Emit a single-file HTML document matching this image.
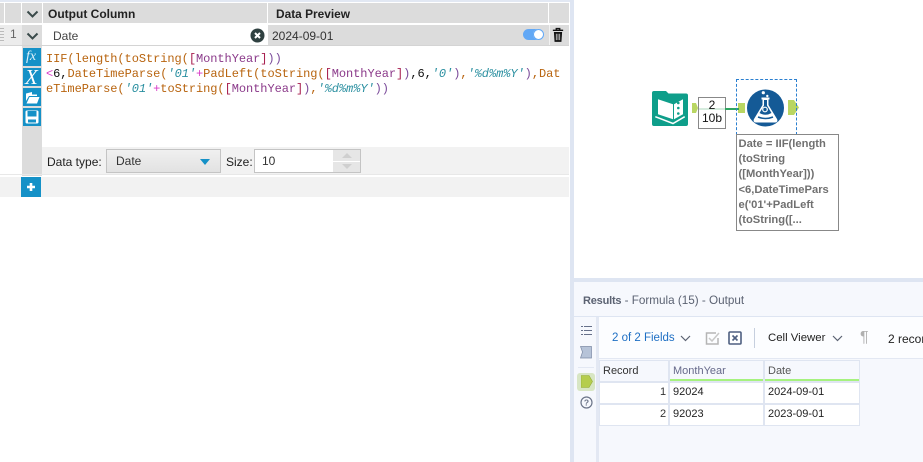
<!DOCTYPE html>
<html><head><meta charset="utf-8">
<style>
html,body{margin:0;padding:0;width:923px;height:462px;overflow:hidden;background:#fff}
body{position:relative;font-family:"Liberation Sans",sans-serif;font-size:12px;color:#222}
.a{position:absolute;white-space:nowrap}
.code{font-family:"Liberation Mono",monospace;font-size:12px;letter-spacing:-.06px;line-height:15px;left:46px;color:#b8640f}
.p{color:#8b3a8a}.r{color:#a82050}.b{color:#111}.s{color:#2a8fa0;font-style:italic}.m{color:#d83ac8}
.c{color:#7a4a9a}
.ib{position:absolute;left:23px;width:18px;height:18px;background:#1591c7}
.t{font-size:11px}
</style></head><body>

<!-- top strip and left pane -->
<div class="a" style="left:0;top:0;width:570px;height:2px;background:#e2e8f3"></div>
<div class="a" style="left:5px;top:3px;width:16px;height:20px;background:#dcdcdc"></div>
<div class="a" style="left:0;top:3px;width:4px;height:20px;background:#dcdcdc"></div>
<div class="a" style="left:22px;top:3px;width:20px;height:20px;background:#dcdcdc"></div>
<div class="a" style="left:43px;top:3px;width:224px;height:20px;background:#dcdcdc"></div>
<div class="a" style="left:268px;top:3px;width:280px;height:20px;background:#dcdcdc"></div>
<div class="a" style="left:549px;top:3px;width:20px;height:20px;background:#dcdcdc"></div>
<svg class="a" style="left:26px;top:10px" width="14" height="9"><path d="M1.500 1.500L6.500 6.500L11.500 1.500" fill="none" stroke="#3a4a4a" stroke-width="2"/></svg>
<div class="a" style="left:48px;top:7px;font-weight:bold;font-size:12px;color:#222">Output Column</div>
<div class="a" style="left:276px;top:7px;font-weight:bold;font-size:11.900px;color:#222">Data Preview</div>

<div class="a" style="left:0;top:25px;width:22px;height:20px;background:#ececec"></div>
<div class="a" style="left:0;top:28px;width:4px;height:14px;background:repeating-linear-gradient(#bbb 0 1px,#eee 1px 3px)"></div>
<div class="a" style="left:10px;top:27px;color:#666">1</div>
<div class="a" style="left:22px;top:25px;width:20px;height:20px;background:#dcdcdc"></div>
<svg class="a" style="left:26px;top:32px" width="14" height="9"><path d="M1.500 1.500L6.500 6.500L11.500 1.500" fill="none" stroke="#3a4a4a" stroke-width="2"/></svg>
<div class="a" style="left:43px;top:26px;width:224px;height:18px;background:#fff"></div>
<div class="a" style="left:53px;top:29px;color:#444">Date</div>
<svg class="a" style="left:250px;top:28px" width="15" height="15"><circle cx="7.500" cy="7.500" r="7" fill="#2f4040"/><path d="M5 5L10 10M10 5L5 10" stroke="#fff" stroke-width="2"/></svg>
<div class="a" style="left:268px;top:25px;width:301px;height:20px;background:#dcdcdc"></div>
<div class="a" style="left:549px;top:25px;width:1px;height:20px;background:#f2f2f2"></div>
<div class="a" style="left:272px;top:29px;color:#333">2024-09-01</div>
<div class="a" style="left:523px;top:29px;width:21px;height:11px;border-radius:6px;background:#62a8f5"></div>
<div class="a" style="left:533px;top:29px;width:11px;height:11px;border-radius:6px;background:#fff;box-shadow:inset 0 0 0 1px #62a8f5"></div>
<svg class="a" style="left:552px;top:27px" width="12" height="16" viewBox="0 0 14 18"><path d="M1 3.500H13M5 3V1.500H9V3" stroke="#111" stroke-width="1.600" fill="none"/><path d="M2.200 5.500H11.800L11 17H3Z" fill="#111"/><path d="M5 7.500V15M7 7.500V15M9 7.500V15" stroke="#ddd" stroke-width=".9"/></svg>
<div class="a" style="left:0;top:45px;width:569px;height:1px;background:#d4d4d4"></div>

<!-- formula area -->
<div class="a" style="left:22px;top:46px;width:20px;height:130px;background:#dcdcdc"></div>
<div class="ib" style="top:48px"></div>
<div class="a" style="left:26px;top:49px;color:#dff1fa;font-family:'Liberation Serif',serif;font-style:italic;font-size:14px">fx</div>
<div class="ib" style="top:68px"></div>
<div class="a" style="left:25px;top:65px;color:#fff;font-family:'Liberation Serif',serif;font-style:italic;font-size:21px">X</div>
<div class="ib" style="top:88px"></div>
<svg class="a" style="left:25px;top:91px" width="15" height="13"><path d="M1 2.500L7 1V3.500H12V5H4L1 10Z" fill="#fff"/><path d="M4.500 6H14.500L12 12.500H1.500Z" fill="#fff"/></svg>
<div class="ib" style="top:108px"></div>
<svg class="a" style="left:25px;top:110px" width="14" height="14"><rect x="0.500" y="0.500" width="13" height="13" rx="1.500" fill="#fff"/><rect x="2.500" y="1" width="9" height="5.500" fill="#1591c7"/><rect x="3" y="9.500" width="8" height="3" fill="#1591c7"/></svg>

<div class="a code" style="top:52px">IIF(length(toString(<span class="r">[</span><span class="p">MonthYear</span><span class="r">]</span><span class="c">))</span></div>
<div class="a code" style="top:67px"><span class="m">&lt;</span><span class="b">6,</span>DateTimeParse(<span class="s">'01'</span><span class="m">+</span>PadLeft(toString(<span class="r">[</span><span class="p">MonthYear</span><span class="r">]</span><span class="c">)</span><span class="b">,6,</span><span class="s">'0'</span><span class="c">)</span>,<span class="s">'%d%m%Y'</span><span class="c">)</span>,Dat</div>
<div class="a code" style="top:82px">eTimeParse(<span class="s">'01'</span><span class="m">+</span>toString(<span class="r">[</span><span class="p">MonthYear</span><span class="r">]</span><span class="c">)</span>,<span class="s">'%d%m%Y'</span><span class="c">))</span></div>

<div class="a" style="left:42px;top:147px;width:527px;height:27px;background:#f2f2f2"></div>
<div class="a" style="left:47px;top:155px;color:#222">Data type:</div>
<div class="a" style="left:106px;top:149px;width:113px;height:22px;border:1px solid #c4c4c4;background:linear-gradient(#f0f0f0,#e2e2e2)"></div>
<div class="a" style="left:116px;top:154px;color:#333">Date</div>
<svg class="a" style="left:200px;top:159px" width="10" height="6"><path d="M0 0H10L5 6Z" fill="#1591c7"/></svg>
<div class="a" style="left:226px;top:155px;color:#222">Size:</div>
<div class="a" style="left:254px;top:149px;width:105px;height:22px;border:1px solid #c4c4c4;background:#fff"></div>
<div class="a" style="left:262px;top:154px;color:#333">10</div>
<div class="a" style="left:333px;top:150px;width:27px;height:11px;background:#e6e6e6"></div>
<div class="a" style="left:333px;top:162px;width:27px;height:10px;background:#e6e6e6"></div>
<svg class="a" style="left:342px;top:153px" width="10" height="16"><path d="M0 5L5 0L10 5Z" fill="#cfcfcf"/><path d="M0 11H10L5 16Z" fill="#cfcfcf"/></svg>
<div class="a" style="left:0;top:174px;width:569px;height:1px;background:#e8e8e8"></div>
<div class="a" style="left:0;top:177px;width:569px;height:20px;background:#f2f2f2"></div>
<div class="a" style="left:21px;top:177px;width:20px;height:20px;background:#1591c7"></div>
<svg class="a" style="left:26px;top:182px" width="10" height="10"><path d="M5 1V9M1 5H9" stroke="#fff" stroke-width="2.600"/></svg>

<!-- vertical divider -->
<div class="a" style="left:570px;top:0;width:4px;height:462px;background:#dee5f2"></div>

<!-- canvas -->
<svg class="a" style="left:640px;top:70px" width="200" height="110">
 <path d="M14 21H26L28.500 23.500H46Q48 23.500 48 25.500V54Q48 56 46 56H14Q12 56 12 54V23Q12 21 14 21Z" fill="#0e9e8a"/>
 <path d="M18 29.300L33 34.300V49.300L18 44.300Z" fill="#fff"/>
 <path d="M43 29.300L34 34.300V49.300L43 44.300Z" fill="#fff"/>
 <circle cx="38.300" cy="33" r="1.300" fill="#0e9e8a"/><circle cx="38.300" cy="38" r="1.300" fill="#0e9e8a"/><circle cx="38.300" cy="43.500" r="1.300" fill="#0e9e8a"/>
 <path d="M15.300 46.700L33 53.500L44.700 46.700" fill="none" stroke="#fff" stroke-width="1.500"/>
 <path d="M52 33H56L58 38L56 43H52Z" fill="#b9d662"/>
 <path d="M98 33H105V43H98Z" fill="#b9d662"/>
 <circle cx="125.500" cy="38" r="18.500" fill="#145a96"/>
 <path d="M121.500 27.500H129.500V29.500H128.500V35L137 49C138 51 137 52.500 135 52.500H116C114 52.500 113 51 114 49L122.500 35V29.500H121.500Z" fill="#fff"/>
 <path d="M124 30H127V35.500L131.500 43Q125.500 46.500 119.500 43L124 35.500Z" fill="#145a96"/>
 <circle cx="125" cy="39.500" r="2.300" fill="none" stroke="#fff" stroke-width="1.200"/>
 <path d="M118 47Q125.500 50 133 47" fill="none" stroke="#145a96" stroke-width="1.500"/>
 <circle cx="123.300" cy="22.700" r="1.600" fill="#fff"/><circle cx="127.300" cy="26" r="1.200" fill="#fff"/>
 <path d="M148 30H154L159 37.500L154 45H148Z" fill="#b9d662"/>
</svg>
<div class="a" style="left:698px;top:97px;width:26px;height:30px;border:1px solid #888;background:#fff"></div>
<div class="a" style="left:699px;top:108px;width:26px;height:2px;background:#d6ecde"></div>
<div class="a" style="left:698px;top:99px;width:28px;text-align:center;font-size:12px;line-height:13px;color:#111">2<br>10b</div>
<div class="a" style="left:725px;top:108px;width:14px;height:2px;background:#2fa561"></div>
<div class="a" style="left:736px;top:79px;width:59px;height:55px;border:1px dashed #2a7fd0;border-bottom:0"></div>
<div class="a" style="left:736px;top:134px;border:1px solid #888;background:#fff;color:#707070;font-weight:bold;font-size:11.200px;line-height:15.200px;padding:2px 0 0 1.500px;width:99.500px;height:93px">Date = IIF(length<br>(toString<br>([MonthYear]))<br>&lt;6,DateTimePars<br>e('01'+PadLeft<br>(toString([...</div>

<!-- results -->
<div class="a" style="left:574px;top:278px;width:349px;height:4px;background:#dee5f2"></div>
<div class="a" style="left:574px;top:282px;width:349px;height:180px;background:#f6f8fd"></div>
<div class="a" style="left:574px;top:316px;width:349px;height:1px;background:#dee5f2"></div>
<div class="a" style="left:583px;top:294px;font-size:11.700px;color:#5b6272"><b style="font-size:11px;letter-spacing:-.2px">Results</b> - Formula (15) - Output</div>
<div class="a" style="left:574px;top:317px;width:25px;height:145px;background:#f6f8fd;border-right:3px solid #e3e8f3;box-sizing:border-box"></div>
<div class="a" style="left:599px;top:317px;width:324px;height:41px;background:#fcfdff"></div>
<svg class="a" style="left:580px;top:323px" width="14" height="40">
 <path d="M4 3.500H12M4 7.500H12M4 11.500H12" stroke="#66708a" stroke-width="1"/><path d="M1 3.500H3M1 7.500H3M1 11.500H3" stroke="#66708a" stroke-width="1"/>
 <path d="M0.500 23.500H11.500V35H0.500L2.500 29Z" fill="#b6c3d8" stroke="#7d8aa5" stroke-width=".7"/>
</svg>
<div class="a" style="left:578px;top:367px;width:16px;height:1px;background:#e3e8f3"></div>
<div class="a" style="left:577px;top:373px;width:18px;height:18px;border-radius:3px;background:#d8e6c4"></div>
<svg class="a" style="left:581px;top:375px" width="12" height="13"><path d="M0 0.500H8L11.500 6.500L8 12.500H0Z" fill="#b5cd4d" stroke="#93ab3a" stroke-width=".6"/></svg>
<svg class="a" style="left:580px;top:396px" width="13" height="13"><circle cx="6.500" cy="6.500" r="5.500" fill="none" stroke="#6b7488" stroke-width="1.200"/><text x="6.500" y="9.500" font-size="8.500" font-family="Liberation Sans" font-weight="bold" text-anchor="middle" fill="#6b7488">?</text></svg>

<div class="a" style="left:612px;top:332px;color:#1e6fc4;font-size:11.500px">2 of 2 Fields</div>
<svg class="a" style="left:680px;top:335px" width="12" height="8"><path d="M1 1L5.500 5.500L10 1" fill="none" stroke="#5b6272" stroke-width="1.200"/></svg>
<svg class="a" style="left:705px;top:331px" width="16" height="15"><path d="M13 7V13H1.500V2H11" fill="none" stroke="#b5b5b5" stroke-width="1.500"/><path d="M4 7L7 10L14 2" fill="none" stroke="#c8c8c8" stroke-width="1.500"/></svg>
<svg class="a" style="left:728px;top:331px" width="14" height="14"><rect x="1" y="1" width="12" height="12" rx="1" fill="#fff" stroke="#4e5f80" stroke-width="1.600"/><path d="M4.500 4.500L9.500 9.500M9.500 4.500L4.500 9.500" stroke="#4e5f80" stroke-width="1.600"/></svg>
<div class="a" style="left:754px;top:328px;width:1px;height:20px;background:#c6cfde"></div>
<div class="a" style="left:768px;top:332px;color:#222;font-size:11.400px">Cell Viewer</div>
<svg class="a" style="left:832px;top:335px" width="12" height="8"><path d="M1 1L5.500 5.500L10 1" fill="none" stroke="#5b6272" stroke-width="1.200"/></svg>
<div class="a" style="left:860px;top:329px;color:#b0b0b0;font-size:16px">¶</div>
<div class="a" style="left:888px;top:332px;color:#222">2 recor</div>
<div class="a" style="left:599px;top:358px;width:324px;height:1px;background:#e3e8f3"></div>

<!-- table -->
<div class="a" style="left:599px;top:360px;width:261px;height:66px;background:#dfe5f1"></div>
<div class="a" style="left:600px;top:361px;width:68px;height:20px;background:#f6f8fd"></div>
<div class="a" style="left:670px;top:361px;width:93px;height:18px;background:#f6f8fd;border-bottom:2px solid #a6f27e"></div>
<div class="a" style="left:765px;top:361px;width:94px;height:18px;background:#f6f8fd;border-bottom:2px solid #a6f27e"></div>
<div class="a" style="left:600px;top:383px;width:68px;height:20px;background:#fff"></div>
<div class="a" style="left:670px;top:383px;width:93px;height:20px;background:#fff"></div>
<div class="a" style="left:765px;top:383px;width:94px;height:20px;background:#fff"></div>
<div class="a" style="left:600px;top:405px;width:68px;height:20px;background:#fff"></div>
<div class="a" style="left:670px;top:405px;width:93px;height:20px;background:#fff"></div>
<div class="a" style="left:765px;top:405px;width:94px;height:20px;background:#fff"></div>
<div class="a t" style="left:603px;top:365px;color:#333">Record</div>
<div class="a t" style="left:673px;top:365px;color:#66698a">MonthYear</div>
<div class="a t" style="left:768px;top:365px;color:#555">Date</div>
<div class="a t" style="left:660px;top:386px;color:#333">1</div>
<div class="a t" style="left:673px;top:386px;color:#222">92024</div>
<div class="a t" style="left:768px;top:386px;color:#222">2024-09-01</div>
<div class="a t" style="left:660px;top:408px;color:#333">2</div>
<div class="a t" style="left:673px;top:408px;color:#222">92023</div>
<div class="a t" style="left:768px;top:408px;color:#222">2023-09-01</div>
</body></html>
